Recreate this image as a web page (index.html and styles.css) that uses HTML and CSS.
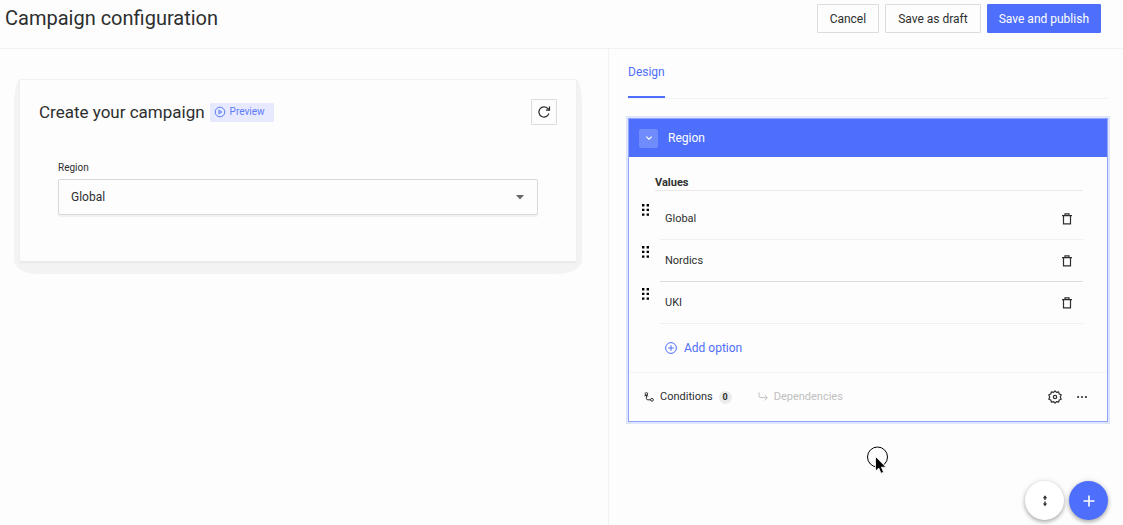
FILE: index.html
```
<!DOCTYPE html>
<html lang="en">
  <head>
    <meta charset="utf-8">
    <meta name="viewport" content="width=device-width, initial-scale=1">
    <title>Campaign configuration</title>
    <link rel="stylesheet" href="styles.css">
  </head>
  <body>
    <header class="topbar">
      <h1>Campaign configuration</h1>
      <div class="topbar-actions">
        <button class="btn" type="button">Cancel</button>
        <button class="btn" type="button">Save as draft</button>
        <button class="btn btn-primary" type="button">Save and publish</button>
      </div>
    </header>
    <main class="workspace">
      <section class="preview-pane">
        <div class="preview-shadow">
          <div class="preview-card">
            <div class="preview-head">
              <h2>Create your campaign</h2>
              <span class="tag">
                <svg width="12" height="12" viewBox="0 0 12 12" fill="none" stroke="currentColor">
                  <circle cx="6" cy="6" r="4.8" />
                  <path d="M4.9 4.1v3.8L7.8 6z" fill="currentColor" fill-opacity=".5" stroke-width=".8" stroke-linejoin="round" />
                </svg>
                Preview
              </span>
              <button class="btn-refresh" type="button" aria-label="Refresh">
                <svg width="14" height="14" viewBox="0 0 14 14" fill="none" stroke="currentColor" stroke-width="1.2">
                  <path d="M11.9 8.4A5.1 5.1 0 1 1 10.8 3.5L12.2 5" />
                  <path d="M12.5 1.6V5.2H8.9" />
                </svg>
              </button>
            </div>
            <div class="field">
              <label for="region">Region</label>
              <div class="select-wrap">
                <select id="region">
                  <option>Global</option>
                  <option>Nordics</option>
                  <option>UKI</option>
                </select>
                <svg class="select-arrow" width="8" height="5" viewBox="0 0 8 5"><path d="M0 0h8L4 4.6z" fill="#666" /></svg>
              </div>
            </div>
          </div>
        </div>
      </section>
      <section class="design-pane">
        <nav class="tabs">
          <a class="active" href="#design">Design</a>
        </nav>
        <div class="panel" id="design">
          <div class="panel-head">
            <button class="btn-collapse" type="button" aria-label="Collapse">
              <svg width="8" height="6" viewBox="0 0 8 6" fill="none" stroke="currentColor" stroke-width="1.2"><path d="M1.3 1.6 4 4.2l2.7-2.6" /></svg>
            </button>
            <h3>Region</h3>
          </div>
          <div class="panel-body">
            <h4>Values</h4>
            <ul class="values">
              <li>
                <svg class="handle" width="8" height="12" viewBox="0 0 8 12"><path d="M0 0h2.4v2.4H0zM4.6 0H7v2.4H4.6zM0 4.7h2.4v2.4H0zM4.6 4.7H7v2.4H4.6zM0 9.4h2.4v2.4H0zM4.6 9.4H7v2.4H4.6z" /></svg>
                <div class="value-row">
                  <input type="text" value="Global" aria-label="Value 1">
                  <button class="btn-icon" type="button" aria-label="Delete Global">
                    <svg width="10" height="12" viewBox="0 0 10 12" fill="none" stroke="currentColor" stroke-width="1.2"><path d="M0 2.6h10M3 2.6V.8h4v1.8M1.5 2.6v8.2h7V2.6" /></svg>
                  </button>
                </div>
              </li>
              <li>
                <svg class="handle" width="8" height="12" viewBox="0 0 8 12"><path d="M0 0h2.4v2.4H0zM4.6 0H7v2.4H4.6zM0 4.7h2.4v2.4H0zM4.6 4.7H7v2.4H4.6zM0 9.4h2.4v2.4H0zM4.6 9.4H7v2.4H4.6z" /></svg>
                <div class="value-row dark">
                  <input type="text" value="Nordics" aria-label="Value 2">
                  <button class="btn-icon" type="button" aria-label="Delete Nordics">
                    <svg width="10" height="12" viewBox="0 0 10 12" fill="none" stroke="currentColor" stroke-width="1.2"><path d="M0 2.6h10M3 2.6V.8h4v1.8M1.5 2.6v8.2h7V2.6" /></svg>
                  </button>
                </div>
              </li>
              <li>
                <svg class="handle" width="8" height="12" viewBox="0 0 8 12"><path d="M0 0h2.4v2.4H0zM4.6 0H7v2.4H4.6zM0 4.7h2.4v2.4H0zM4.6 4.7H7v2.4H4.6zM0 9.4h2.4v2.4H0zM4.6 9.4H7v2.4H4.6z" /></svg>
                <div class="value-row">
                  <input type="text" value="UKI" aria-label="Value 3">
                  <button class="btn-icon" type="button" aria-label="Delete UKI">
                    <svg width="10" height="12" viewBox="0 0 10 12" fill="none" stroke="currentColor" stroke-width="1.2"><path d="M0 2.6h10M3 2.6V.8h4v1.8M1.5 2.6v8.2h7V2.6" /></svg>
                  </button>
                </div>
              </li>
            </ul>
            <button class="btn-add" type="button">
              <svg width="12" height="12" viewBox="0 0 12 12" fill="none" stroke="currentColor">
                <circle cx="6" cy="6" r="5.4" />
                <path d="M6 3.2v5.6M3.2 6h5.6" />
              </svg>
              Add option
            </button>
          </div>
          <div class="panel-foot">
            <button class="btn-foot" type="button">
              <svg width="10" height="10" viewBox="0 0 10 10" fill="none" stroke="currentColor">
                <circle cx="2.4" cy="1.9" r="1.3" />
                <circle cx="7.9" cy="7.8" r="1.4" />
                <path d="M2.4 3.2v3.2q0 1.4 1.4 1.4h2.7M.5 3.9 2.4 3.2l1.8 1" />
              </svg>
              Conditions
              <span class="count">0</span>
            </button>
            <button class="btn-foot btn-dependencies" type="button" disabled>
              <svg width="10" height="10" viewBox="0 0 10 10" fill="none" stroke="currentColor">
                <path d="M1 .5v3.2q0 2 2 2h6M6.6 3 9.3 5.7 6.6 8.4" />
              </svg>
              Dependencies
            </button>
            <button class="btn-icon btn-settings" type="button" aria-label="Settings">
              <svg width="14" height="14" viewBox="0 0 14 14" fill="none" stroke="currentColor" stroke-width="1.2" stroke-linejoin="round">
                <path d="M7 .8 8.5 2.4 10.6 1.8 11.2 4 13.2 4.8 12.3 7 13.2 9.2 11.2 10 10.6 12.2 8.5 11.6 7 13.2 5.5 11.6 3.4 12.2 2.8 10 .8 9.2 1.7 7 .8 4.8 2.8 4 3.4 1.8 5.5 2.4z" />
                <circle cx="7" cy="7" r="1.7" />
              </svg>
            </button>
            <button class="btn-icon" type="button" aria-label="More">
              <svg width="10" height="4" viewBox="0 0 10 4" fill="currentColor"><circle cx="1.1" cy="2" r="1.1" /><circle cx="5" cy="2" r="1.1" /><circle cx="8.9" cy="2" r="1.1" /></svg>
            </button>
          </div>
        </div>
        <!-- Pointer with click ring -->
        <svg class="pointer" width="24" height="34" viewBox="0 0 24 34">
          <circle cx="11.5" cy="11" r="10" fill="none" stroke="#000" />
          <path d="M9.5 10.5v14.6l3.3-3 2.2 5.2 2.6-1.1-2.2-5h4.6z" fill="#000" stroke="#fff" stroke-width=".8" />
        </svg>
      </section>
    </main>
    <div class="fabs">
      <button class="fab" type="button" aria-label="Reorder">
        <svg width="6" height="12" viewBox="0 0 6 12" fill="currentColor"><path d="M3 .3 5.2 3.2H3.7v1.9H2.3V3.2H.8zM3 11.3.8 8.4h1.5V6.5h1.4v1.9h1.5z" /></svg>
      </button>
      <button class="fab fab-primary" type="button" aria-label="Add">
        <svg width="12" height="12" viewBox="0 0 12 12" fill="none" stroke="currentColor" stroke-width="1.6"><path d="M6 .5v11M.5 6h11" /></svg>
      </button>
    </div>
  </body>
</html>
```
FILE: styles.css
```
* {
  box-sizing: border-box;
}
html {
  height: 100%;
}
body {
  margin: 0;
  min-height: 100%;
  display: flex;
  flex-direction: column;
  background-color: #fdfdfd;
  color: #2d2f2f;
  font-family: Roboto, sans-serif;
  font-size: 12px;
  line-height: 16px;
}
h1, h2, h3, h4 {
  margin: 0;
  font-weight: 400;
}
button, input, select {
  font: inherit;
  color: inherit;
}
button {
  padding: 0;
  border: none;
  background: none;
  cursor: pointer;
}
svg {
  display: block;
  flex: none;
}
.topbar {
  display: flex;
  justify-content: space-between;
  align-items: flex-start;
  padding: 4px 22px 15px 5px;
  border-bottom: 1px solid #f2f2f2;
}
.topbar h1 {
  font-size: 20px;
  line-height: 29px;
}
.topbar-actions {
  display: flex;
  gap: 6px;
}
.btn {
  height: 29px;
  padding: 0 12px;
  border: 1px solid #dcdcdc;
  border-radius: 1px;
}
.btn-primary {
  padding: 0 11px;
  border-color: #4e6ffb;
  background-color: #4e6ffb;
  color: #fff;
}
.workspace {
  flex: 1;
  display: grid;
  grid-template-columns: 609fr 514fr;
}
.preview-pane {
  padding: 30px 26px 0 14px;
  border-right: 1px solid #f2f2f2;
}
.preview-shadow {
  padding: 0 6px 13px;
  border-radius: 6px 6px 24px 24px / 28px 28px 14px 14px;
  background-color: #f3f3f3;
}
.preview-card {
  padding: 19px 19px 46px;
  border-top: 1px solid #f2f2f2;
  background-color: #fdfdfd;
  box-shadow: 0 2px 2px #e8e8e8;
}
.preview-head {
  display: flex;
  align-items: center;
}
.preview-head h2 {
  font-size: 17px;
  line-height: 26px;
}
.tag {
  display: flex;
  align-items: center;
  gap: 4px;
  height: 19px;
  margin-left: 5px;
  padding: 0 9px 0 4px;
  border-radius: 1px;
  background-color: #e7eafe;
  color: #5c7afb;
  font-size: 10px;
}
.btn-refresh {
  display: flex;
  justify-content: center;
  align-items: center;
  width: 26px;
  height: 26px;
  margin-left: auto;
  border: 1px solid #dcdcdc;
  border-radius: 1px;
}
.field {
  padding: 35px 19px 0;
}
.field label {
  display: block;
  margin-bottom: 3px;
  font-size: 10px;
}
.select-wrap {
  position: relative;
}
.select-wrap select {
  appearance: none;
  display: block;
  width: 100%;
  height: 36px;
  padding: 0 12px;
  border: 1px solid #d8dada;
  border-radius: 2px;
  background-color: #fdfdfd;
  box-shadow: 0 2px 1px #f2f2f2;
}
.select-arrow {
  position: absolute;
  top: 16px;
  right: 14px;
}
.design-pane {
  position: relative;
  padding: 0 15px 0 19px;
}
.tabs {
  display: flex;
  margin-bottom: 19px;
  border-bottom: 1px solid #f2f2f2;
}
.tabs a {
  height: 49px;
  padding-top: 15px;
  border-bottom: 2px solid #4e6ffb;
  color: #4e6ffb;
  text-decoration: none;
}
.panel {
  border: 1px solid #8ea3fd;
  box-shadow: 0 0 0 2px #e0e5fe;
}
.panel-head {
  display: flex;
  align-items: center;
  gap: 10px;
  height: 38px;
  padding-left: 10px;
  background-color: #4e6ffb;
  color: #fff;
}
.btn-collapse {
  display: flex;
  justify-content: center;
  align-items: center;
  width: 19px;
  height: 19px;
  border-radius: 2px;
  background-color: #708bfc;
}
.panel-head h3 {
  font-size: 12px;
}
.panel-body {
  padding: 18px 24px 16px 13px;
}
.panel-body h4 {
  margin-left: 13px;
  border-bottom: 1px solid #e9e9e9;
  font-size: 11px;
  font-weight: 700;
  line-height: 15px;
}
.values {
  margin: 0;
  padding: 7px 0 0;
  list-style: none;
}
.values li {
  display: flex;
  gap: 10px;
}
.handle {
  margin-top: 6px;
}
.value-row {
  flex: 1;
  display: flex;
  align-items: center;
  height: 42px;
  border-bottom: 1px solid #f0f0f0;
}
.value-row.dark {
  border-color: #dcdcdc;
}
.value-row input {
  flex: 1;
  min-width: 0;
  padding: 0 5px;
  border: none;
  outline: none;
  background: none;
  font-size: 11px;
}
.btn-icon {
  padding: 4px 11px;
}
.btn-add {
  display: flex;
  align-items: center;
  gap: 7px;
  margin: 16px 0 0 23px;
  color: #4e6ffb;
}
.panel-foot {
  display: flex;
  align-items: center;
  height: 49px;
  padding: 0 9px 0 15px;
  border-top: 1px solid #f2f2f2;
}
.btn-foot {
  display: flex;
  align-items: center;
  gap: 6px;
  font-size: 11px;
}
.btn-dependencies {
  margin-left: 26px;
  color: #bfbfbf;
  cursor: default;
}
.count {
  min-width: 13px;
  border-radius: 7px;
  background-color: #ebebeb;
  font-size: 9px;
  font-weight: 700;
  line-height: 13px;
  text-align: center;
}
.btn-settings {
  margin-left: auto;
  padding: 4px;
}
.pointer {
  position: absolute;
  top: 397px;
  left: 257px;
}
.fabs {
  position: fixed;
  right: 15px;
  bottom: 5px;
  display: flex;
  gap: 5px;
}
.fab {
  display: flex;
  justify-content: center;
  align-items: center;
  width: 39px;
  height: 39px;
  border-radius: 50%;
  background-color: #fff;
  box-shadow: 0 2px 4px rgba(0, 0, 0, .3), 0 0 6px rgba(0, 0, 0, .1);
}
.fab-primary {
  background-color: #4e6ffb;
  color: #fff;
}
```
